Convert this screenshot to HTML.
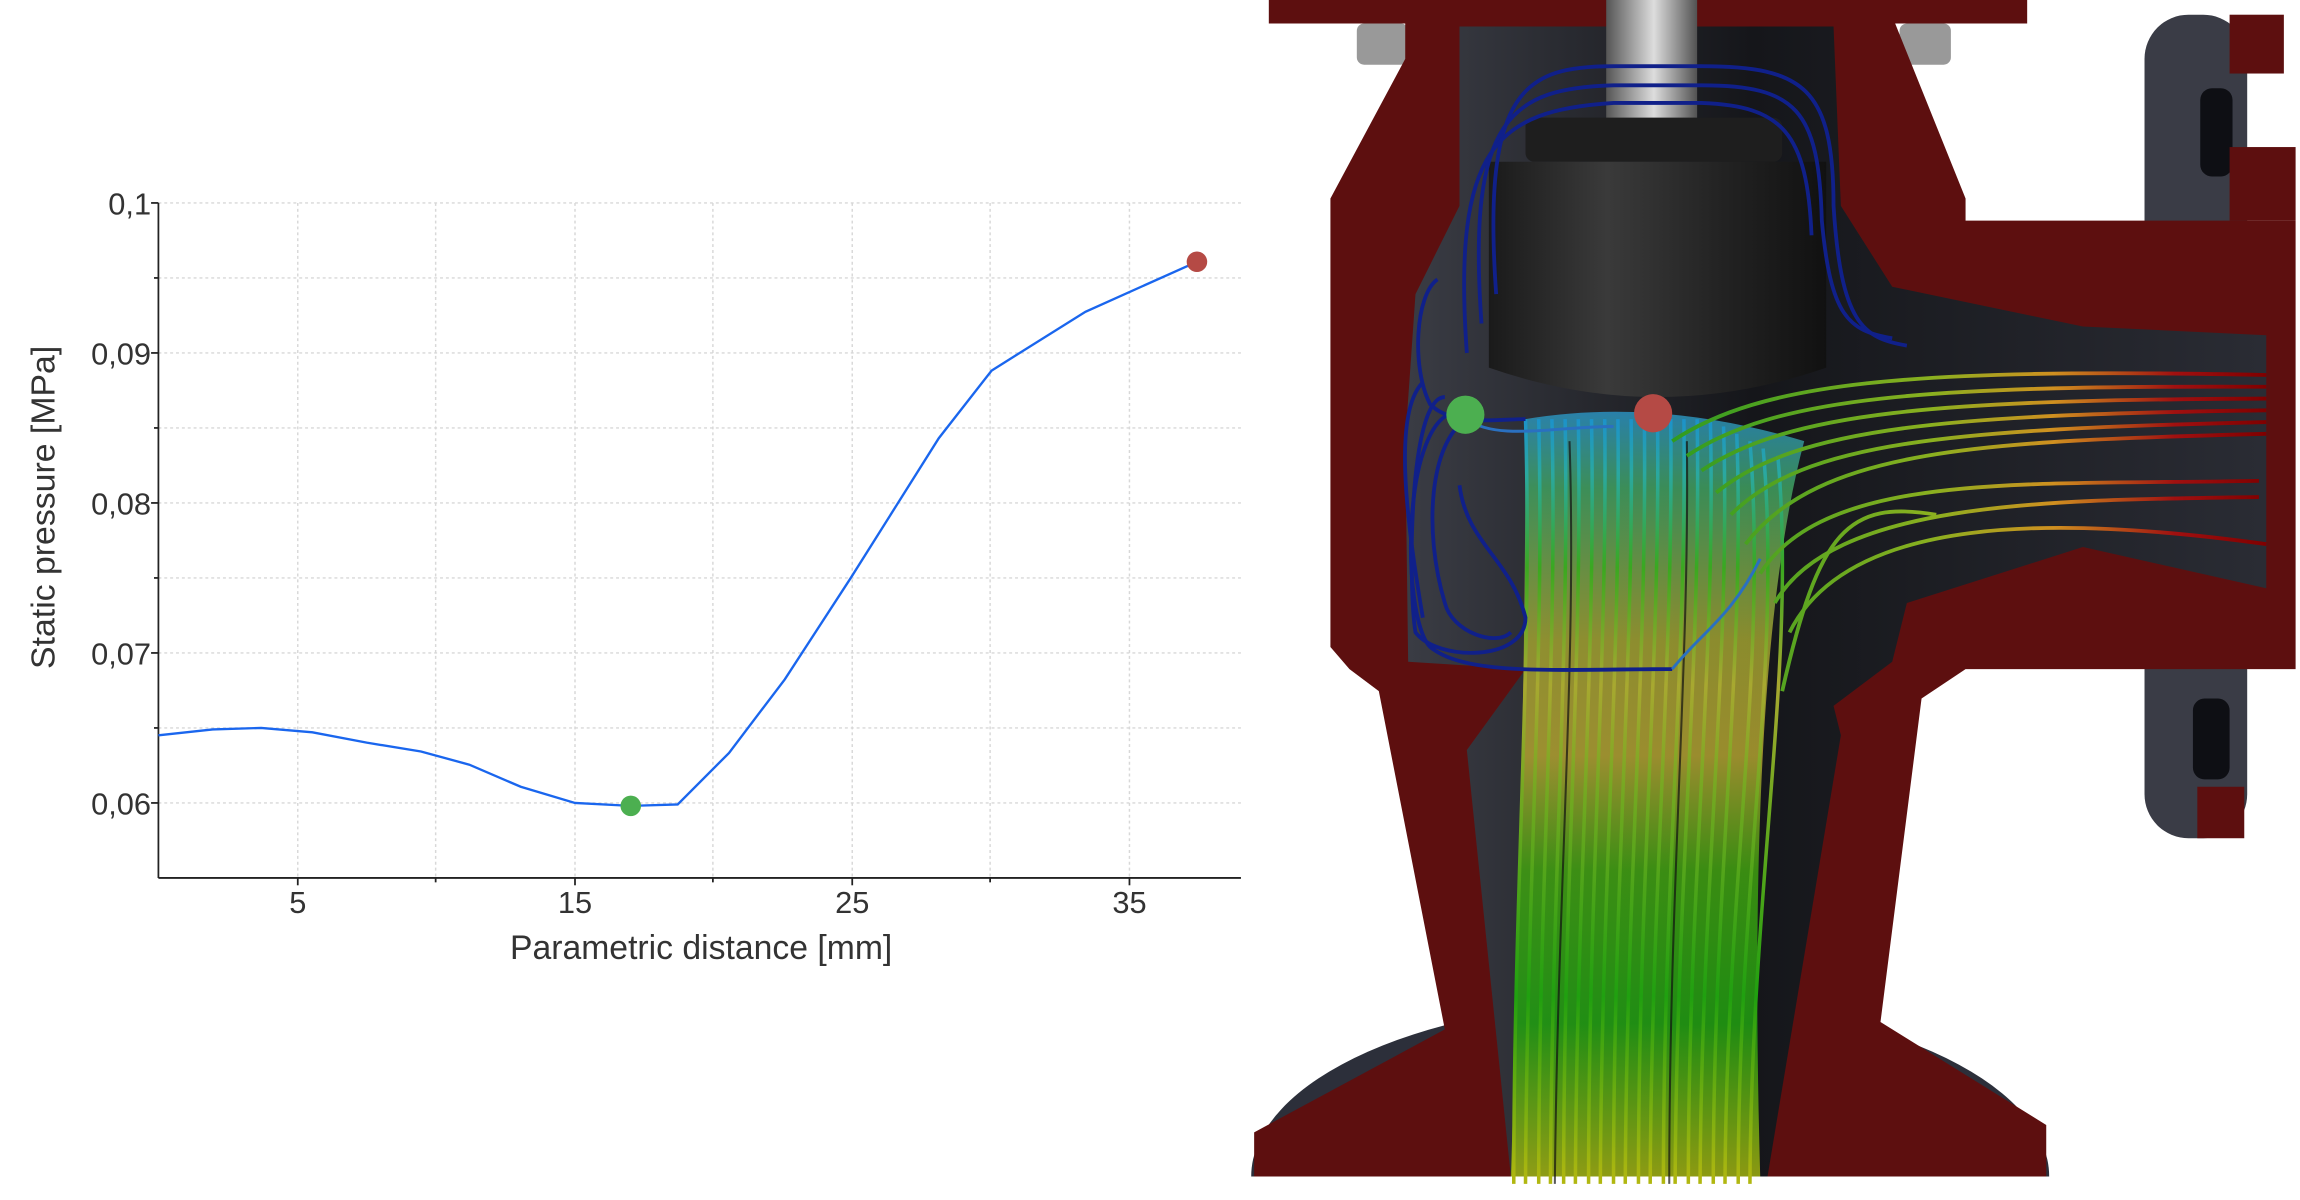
<!DOCTYPE html>
<html><head><meta charset="utf-8"><style>html,body{margin:0;padding:0;background:#fff;overflow:hidden;width:2300px;height:1200px}svg{display:block}</style></head><body>
<svg width="2300" height="1200" viewBox="0 0 1568 816" preserveAspectRatio="none" xmlns="http://www.w3.org/2000/svg">
<defs>
<clipPath id="clipb"><rect x="0" y="0" width="1568" height="800"/></clipPath>
<linearGradient id="down" x1="0" y1="280" x2="0" y2="810" gradientUnits="userSpaceOnUse"><stop offset="0" stop-color="#1a8fd0"/><stop offset="0.08" stop-color="#2aa8a0"/><stop offset="0.2" stop-color="#3aa820"/><stop offset="0.35" stop-color="#a8a830"/><stop offset="0.5" stop-color="#70a820"/><stop offset="0.75" stop-color="#20a010"/><stop offset="1" stop-color="#b8b810"/></linearGradient>
<linearGradient id="right" x1="1130" y1="0" x2="1545" y2="0" gradientUnits="userSpaceOnUse"><stop offset="0" stop-color="#2a9a20"/><stop offset="0.45" stop-color="#8ab020"/><stop offset="0.65" stop-color="#d09020"/><stop offset="0.85" stop-color="#a01010"/><stop offset="1" stop-color="#800000"/></linearGradient>
<linearGradient id="glow" x1="0" y1="280" x2="0" y2="800" gradientUnits="userSpaceOnUse"><stop offset="0" stop-color="#2a90c0"/><stop offset="0.1" stop-color="#40a060"/><stop offset="0.3" stop-color="#a0a030"/><stop offset="0.45" stop-color="#b0a030"/><stop offset="0.6" stop-color="#40a010"/><stop offset="0.8" stop-color="#20a010"/><stop offset="1" stop-color="#a0b010"/></linearGradient>
<linearGradient id="cyl" x1="1015" y1="0" x2="1245" y2="0" gradientUnits="userSpaceOnUse"><stop offset="0" stop-color="#1a1a1a"/><stop offset="0.35" stop-color="#3a3a3a"/><stop offset="0.7" stop-color="#222"/><stop offset="1" stop-color="#111"/></linearGradient>
<linearGradient id="stem" x1="1095" y1="0" x2="1160" y2="0" gradientUnits="userSpaceOnUse"><stop offset="0" stop-color="#555"/><stop offset="0.5" stop-color="#ddd"/><stop offset="1" stop-color="#444"/></linearGradient>
<linearGradient id="cav" x1="960" y1="0" x2="1545" y2="0" gradientUnits="userSpaceOnUse"><stop offset="0" stop-color="#3a3c44"/><stop offset="0.4" stop-color="#15161a"/><stop offset="1" stop-color="#2a2c34"/></linearGradient>
</defs>
<rect width="1568" height="816" fill="#fff"/>
<g stroke="#d8d8d8" stroke-width="1" stroke-dasharray="2,2">
<line x1="108" y1="138" x2="846" y2="138"/><line x1="108" y1="189" x2="846" y2="189"/><line x1="108" y1="240" x2="846" y2="240"/><line x1="108" y1="291" x2="846" y2="291"/><line x1="108" y1="342" x2="846" y2="342"/><line x1="108" y1="393" x2="846" y2="393"/><line x1="108" y1="444" x2="846" y2="444"/><line x1="108" y1="495" x2="846" y2="495"/><line x1="108" y1="546" x2="846" y2="546"/>
<line x1="203" y1="138" x2="203" y2="597"/><line x1="297" y1="138" x2="297" y2="597"/><line x1="392" y1="138" x2="392" y2="597"/><line x1="486" y1="138" x2="486" y2="597"/><line x1="581" y1="138" x2="581" y2="597"/><line x1="675" y1="138" x2="675" y2="597"/><line x1="770" y1="138" x2="770" y2="597"/>
</g>
<g stroke="#222" stroke-width="1.2">
<line x1="108" y1="138" x2="108" y2="597"/><line x1="108" y1="597" x2="846" y2="597"/>
<line x1="103" y1="138" x2="108" y2="138"/><line x1="105" y1="189" x2="108" y2="189"/><line x1="103" y1="240" x2="108" y2="240"/><line x1="105" y1="291" x2="108" y2="291"/><line x1="103" y1="342" x2="108" y2="342"/><line x1="105" y1="393" x2="108" y2="393"/><line x1="103" y1="444" x2="108" y2="444"/><line x1="105" y1="495" x2="108" y2="495"/><line x1="103" y1="546" x2="108" y2="546"/>
<line x1="203" y1="597" x2="203" y2="602"/><line x1="297" y1="597" x2="297" y2="600"/><line x1="392" y1="597" x2="392" y2="602"/><line x1="486" y1="597" x2="486" y2="600"/><line x1="581" y1="597" x2="581" y2="602"/><line x1="675" y1="597" x2="675" y2="600"/><line x1="770" y1="597" x2="770" y2="602"/>
</g>
<g font-family="Liberation Sans, sans-serif" font-size="21" fill="#333" text-anchor="end">
<text x="103" y="146">0,1</text><text x="103" y="248">0,09</text><text x="103" y="350">0,08</text><text x="103" y="452">0,07</text><text x="103" y="554">0,06</text>
</g>
<g font-family="Liberation Sans, sans-serif" font-size="21" fill="#333" text-anchor="middle">
<text x="203" y="621">5</text><text x="392" y="621">15</text><text x="581" y="621">25</text><text x="770" y="621">35</text>
<text x="478" y="652" font-size="23">Parametric distance [mm]</text>
<text transform="translate(37,345) rotate(-90)" font-size="23">Static pressure [MPa]</text>
</g>
<polyline fill="none" stroke="#1a66ee" stroke-width="1.6" points="108,500 145,496 178,495 213,498 250,505 287,511 320,520 355,535 392,546 430,548 462,547 497,512 535,462 580,393 640,298 676,252 740,212 816,178"/>
<circle cx="430" cy="548" r="7" fill="#4caf50"/><circle cx="816" cy="178" r="7" fill="#b54a45"/>
<g clip-path="url(#clipb)">
<ellipse cx="1125" cy="800" rx="272" ry="120" fill="#2c2f3a"/>
</g>
<rect x="1462" y="10" width="70" height="560" rx="30" fill="#3a3c46"/>
<rect x="1500" y="60" width="22" height="60" rx="8" fill="#0e0f14"/><rect x="1495" y="475" width="25" height="55" rx="8" fill="#0e0f14"/>
<rect x="925" y="16" width="35" height="28" rx="5" fill="#999"/><rect x="1295" y="16" width="35" height="28" rx="5" fill="#999"/>
<rect x="880" y="760" width="60" height="30" rx="8" fill="#15161c"/><rect x="1305" y="760" width="60" height="30" rx="8" fill="#15161c"/>
<rect x="1520" y="10" width="37" height="40" fill="#5d0f0f"/><rect x="1498" y="535" width="32" height="35" fill="#5d0f0f"/><rect x="1520" y="100" width="45" height="50" fill="#5d0f0f"/>
<polygon fill="#5d0f0f" points="865,0 1382,0 1382,16 1292,16 1340,135 1340,150 1565,150 1565,455 1340,455 1310,475 1282,695 1395,765 1395,800 1195,800 1195,770 1030,770 1030,800 855,800 855,770 985,700 940,470 920,455 907,440 907,135 958,40 958,16 865,16"/>
<polygon fill="url(#cav)" points="995,18 1250,18 1255,140 1290,195 1420,222 1545,228 1545,400 1420,372 1300,410 1290,450 1250,480 1255,500 1205,800 1030,800 1000,510 1040,455 960,450 958,300 965,200 995,140"/>
<rect x="1095" y="0" width="62" height="85" fill="url(#stem)"/>
<rect x="1040" y="80" width="175" height="30" rx="6" fill="#1e1e1e"/>
<path d="M1015,110 H1245 V250 Q1130,290 1015,250 Z" fill="url(#cyl)"/>
<path d="M1040,285 Q1130,270 1230,300 Q1190,450 1200,800 H1030 Q1040,500 1040,285Z" fill="url(#glow)" opacity="0.85"/>
<g fill="none" stroke="url(#down)" stroke-width="2.4">
<path d="M1040,285 C1045,450 1032,600 1032,805"/><path d="M1049,285 C1053,450 1041,600 1040,805"/><path d="M1058,285 C1062,450 1049,600 1049,805"/><path d="M1067,285 C1070,450 1058,600 1057,805"/><path d="M1076,285 C1079,450 1066,600 1066,805"/><path d="M1085,285 C1088,450 1075,600 1074,805"/><path d="M1094,285 C1096,450 1083,600 1083,805"/><path d="M1103,285 C1105,450 1092,600 1091,805"/><path d="M1112,285 C1114,450 1100,600 1100,805"/><path d="M1121,285 C1123,450 1109,600 1108,805"/><path d="M1130,285 C1132,450 1117,600 1117,805"/><path d="M1139,285 C1141,450 1126,600 1125,805"/><path d="M1148,285 C1150,450 1134,600 1134,805"/><path d="M1157,285 C1160,450 1143,600 1142,805"/><path d="M1166,285 C1170,450 1151,600 1151,805"/><path d="M1175,290 C1180,450 1160,600 1159,805"/><path d="M1184,295 C1190,450 1168,600 1168,805"/><path d="M1193,300 C1205,450 1177,600 1176,805"/><path d="M1202,305 C1215,450 1185,600 1185,805"/><path d="M1212,310 C1225,450 1194,600 1193,805"/>
</g>
<g fill="none" stroke="#111" stroke-width="1.4" opacity="0.7"><path d="M1070,300 C1075,450 1062,600 1060,805"/><path d="M1150,300 C1152,450 1138,600 1138,805"/></g>
<g fill="none" stroke="url(#right)" stroke-width="2.6">
<path d="M1140,300 C1200,260 1300,250 1545,255"/><path d="M1150,310 C1210,270 1310,262 1545,263"/><path d="M1160,320 C1220,280 1320,272 1545,271"/><path d="M1170,335 C1225,290 1330,282 1545,279"/><path d="M1180,350 C1230,300 1330,292 1545,287"/><path d="M1190,370 C1240,305 1350,300 1545,295"/><path d="M1200,390 C1245,320 1380,330 1540,327"/><path d="M1210,410 C1250,340 1400,340 1540,338"/><path d="M1220,430 C1260,350 1400,350 1545,370"/><path d="M1215,470 C1240,360 1260,340 1320,350"/>
</g>
<g fill="none" stroke="#10208a" stroke-width="2.6">
<path d="M1020,200 C1010,60 1040,45 1100,45 L1160,45 C1230,45 1250,60 1250,140 C1255,220 1270,230 1300,235"/>
<path d="M1010,220 C1000,80 1030,60 1100,58 L1160,58 C1225,58 1240,75 1242,150 C1248,215 1260,225 1290,230"/>
<path d="M1000,240 C990,100 1020,75 1100,70 L1160,70 C1215,72 1232,90 1235,160"/>
<path d="M995,280 C955,280 955,420 975,440 C1000,460 1060,455 1140,455"/>
<path d="M985,270 C960,270 960,400 965,430 C980,450 1040,450 1040,420 C1030,380 1000,370 995,330"/>
<path d="M1000,285 C975,300 970,360 985,410 C990,430 1020,440 1030,430"/>
<path d="M980,190 C965,200 962,250 975,275 C990,290 1020,285 1040,285"/>
<path d="M970,260 C950,280 958,350 970,420"/>
</g>
<g fill="none" stroke="#2a70c0" stroke-width="2"><path d="M1000,285 C1020,300 1060,290 1100,290"/><path d="M1140,455 C1160,430 1180,420 1200,380"/></g>
<circle cx="999" cy="282" r="13" fill="#4caf50"/><circle cx="1127" cy="281" r="13" fill="#b54a45"/>
</svg>
</body></html>
